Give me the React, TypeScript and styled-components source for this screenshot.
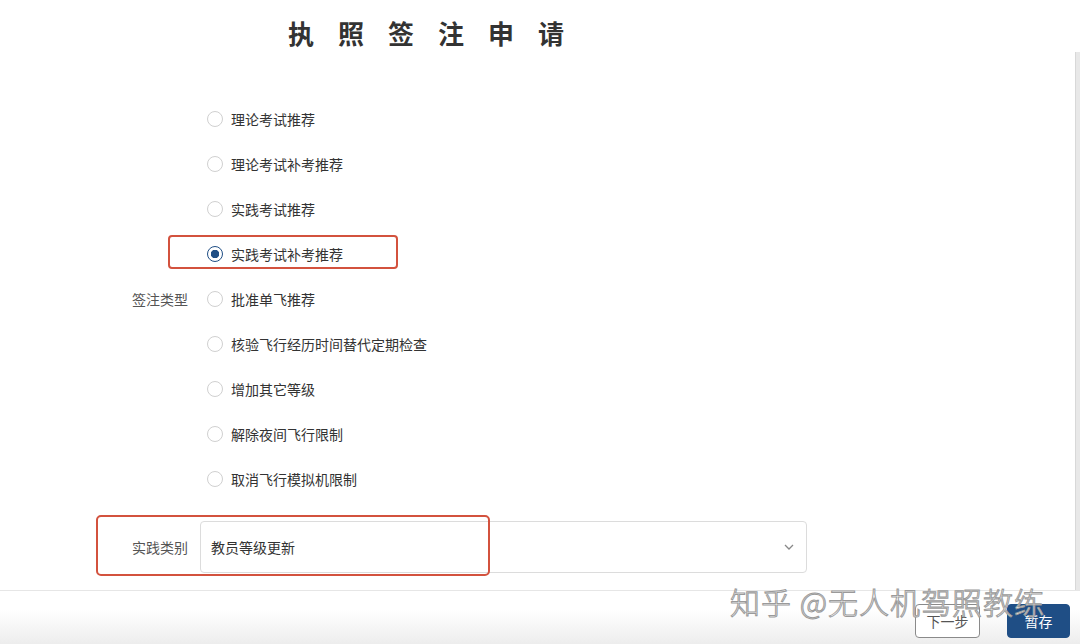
import React from 'react';
import styled, { createGlobalStyle } from 'styled-components';

const GlobalStyle = createGlobalStyle`
  html, body { margin: 0; padding: 0; background: #fff; }
  body { font-family: "Noto Sans CJK SC", "Noto Sans", sans-serif; color: #333; }
`;

const options = [
  '理论考试推荐',
  '理论考试补考推荐',
  '实践考试推荐',
  '实践考试补考推荐',
  '批准单飞推荐',
  '核验飞行经历时间替代定期检查',
  '增加其它等级',
  '解除夜间飞行限制',
  '取消飞行模拟机限制',
];

const App = () => {
  const selected = 3;
  return (
    <Page>
      <GlobalStyle />
      <Title>执照签注申请</Title>
      <Form>
        <Row>
          <Label>签注类型</Label>
          <RadioGroup>
            {options.map((o, i) => (
              <RadioItem key={o}>
                <Radio checked={i === selected} />
                <span>{o}</span>
                {i === selected && <RadioHighlight />}
              </RadioItem>
            ))}
          </RadioGroup>
        </Row>
        <SelectRow>
          <Label>实践类别</Label>
          <Select>
            <span>教员等级更新</span>
            <svg width="10" height="6" viewBox="0 0 10 6">
              <path d="M1 1 L5 5 L9 1" fill="none" stroke="#888" strokeWidth="1.3" />
            </svg>
          </Select>
          <SelectHighlight />
        </SelectRow>
      </Form>
      <Footer>
        <Button>下一步</Button>
        <Button primary>暂存</Button>
      </Footer>
      <ScrollEdge />
      <Watermark>知乎 @无人机驾照教练</Watermark>
    </Page>
  );
};

export default App;

const Page = styled.div`
  position: relative;
  width: 1080px;
  height: 644px;
  overflow: hidden;
  display: flex;
  flex-direction: column;
`;

const Title = styled.h1`
  margin: 0;
  padding: 17px 0 0 288px;
  height: 41px;
  font-size: 26px;
  line-height: 32px;
  font-weight: 700;
  letter-spacing: 24px;
  color: #333;
`;

const Form = styled.div`
  display: flex;
  flex-direction: column;
  padding-top: 38px;
  flex: 1;
`;

const Row = styled.div`
  display: flex;
  align-items: center;
`;

const Label = styled.div`
  width: 200px;
  padding-right: 12px;
  box-sizing: border-box;
  text-align: right;
  font-size: 14px;
  color: #555;
`;

const RadioGroup = styled.div`
  display: flex;
  flex-direction: column;
`;

const RadioItem = styled.label`
  position: relative;
  display: flex;
  align-items: center;
  height: 45px;
  padding-left: 7px;
  gap: 8px;
  font-size: 14px;
  color: #333;
`;

const Radio = styled.span<{ checked?: boolean }>`
  width: 16px;
  height: 16px;
  box-sizing: border-box;
  border-radius: 50%;
  border: 1px solid ${p => (p.checked ? '#1f4e85' : '#d0d0d0')};
  background: ${p => (p.checked ? 'radial-gradient(circle, #1f4e85 0 4px, #fff 4.5px)' : '#fff')};
`;

const RadioHighlight = styled.div`
  position: absolute;
  left: -32px;
  top: 4px;
  width: 230px;
  height: 34px;
  box-sizing: border-box;
  border: 2px solid #d3523e;
  border-radius: 4px;
`;

const SelectRow = styled.div`
  position: relative;
  display: flex;
  align-items: center;
  margin-top: 20px;
`;

const Select = styled.div`
  width: 607px;
  height: 52px;
  box-sizing: border-box;
  border: 1px solid #dcdcdc;
  border-radius: 4px;
  display: flex;
  align-items: center;
  justify-content: space-between;
  padding: 0 12px 0 10px;
  font-size: 14px;
  color: #333;
`;

const SelectHighlight = styled.div`
  position: absolute;
  left: 96px;
  top: -6px;
  width: 394px;
  height: 61px;
  box-sizing: border-box;
  border: 2px solid #d3523e;
  border-radius: 5px;
`;

const Footer = styled.div`
  height: 54px;
  border-top: 1px solid #e6e6e6;
  background: linear-gradient(#fff 0%, #fff 35%, #ededed 100%);
  display: flex;
  justify-content: flex-end;
  align-items: flex-start;
  gap: 27px;
  padding: 13px 10px 0 0;
  box-sizing: border-box;
`;

const Button = styled.button<{ primary?: boolean }>`
  height: 34px;
  width: ${p => (p.primary ? '63px' : '65px')};
  border-radius: 4px;
  font-family: inherit;
  font-size: 14px;
  border: 1px solid ${p => (p.primary ? '#1f4e85' : '#8a8a8a')};
  background: ${p => (p.primary ? '#1f4e85' : '#fff')};
  color: ${p => (p.primary ? '#fff' : '#555')};
`;

const ScrollEdge = styled.div`
  position: absolute;
  right: 0;
  top: 52px;
  width: 4px;
  height: 538px;
  background: #e8e8e8;
  border-left: 1px solid #d8d8d8;
`;

const Watermark = styled.div`
  position: absolute;
  left: 730px;
  top: 579px;
  font-size: 30px;
  font-weight: 300;
  letter-spacing: 1px;
  color: #fff;
  -webkit-text-stroke: 1px #9a9a9a;
  white-space: nowrap;
`;
